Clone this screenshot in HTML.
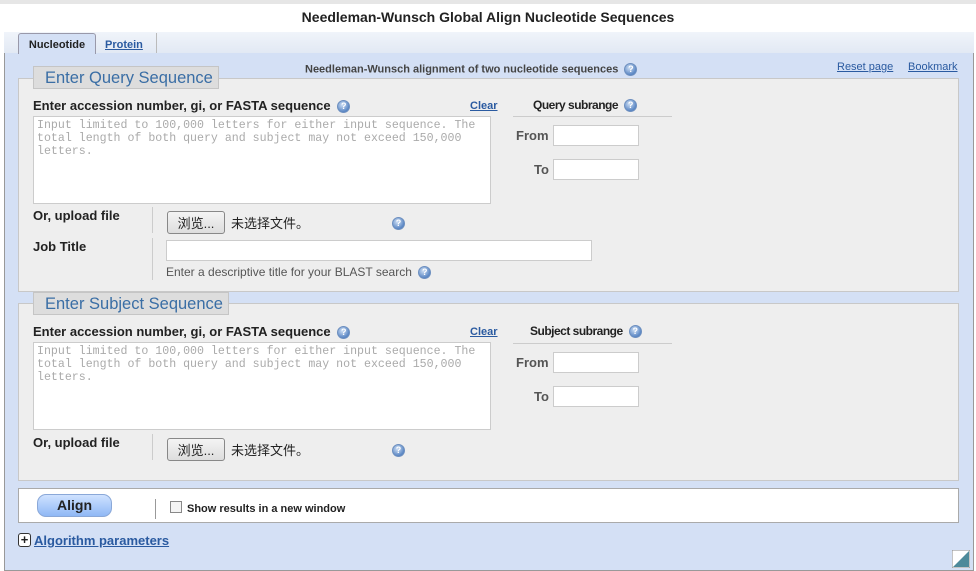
<!DOCTYPE html>
<html><head><meta charset="utf-8"><style>
*{box-sizing:border-box;margin:0;padding:0}
body{width:976px;height:571px;position:relative;background:#fff;font-family:"Liberation Sans","Noto Sans CJK SC",sans-serif;overflow:hidden;color:#222}
.a{position:absolute;white-space:nowrap}
.b{font-weight:bold;font-size:13px;color:#222}
.lnk{color:#2a5aa0;text-decoration:underline;font-size:11px}
.q{display:inline-block;width:13px;height:13px;border-radius:50%;background:radial-gradient(circle at 40% 35%,#cfe0f5,#5b87c4 70%);border:1px solid #6d8fbf;color:#fff;font-size:9px;font-weight:bold;text-align:center;line-height:11px;vertical-align:middle;margin-left:3px}
.fs{background:#eee;border:1px solid #c8c8c8}
.lg{background:#ddd;border:1px solid #c5c5c5;color:#3a6ea5;font-size:16.5px;padding:2px 11px;line-height:18px}
.ta{background:#fff;border:1px solid #ccc;font-family:"Liberation Mono",monospace;font-size:11.6px;color:#aaa;padding:2px 3px;line-height:13px;white-space:normal}
.in{background:#fff;border:1px solid #ccc}
.btn{border:1px solid #888;border-radius:3px;background:linear-gradient(#f4f4f4,#ddd);font-size:13px;padding:1px 0;text-align:center}
.vl{border-left:1px solid #ccc}
</style></head><body>
<div class="a" style="left:0;top:0;width:976px;height:4px;background:#e6e6e6"></div>
<div class="a b" style="left:0;top:9px;width:976px;text-align:center;font-size:14px">Needleman-Wunsch Global Align Nucleotide Sequences</div>
<div class="a" style="left:4px;top:32px;width:970px;height:22px;background:linear-gradient(#f0f4fa,#e2e9f4);border-bottom:1px solid #9aa"></div>
<div class="a" style="left:4px;top:53px;width:970px;height:518px;background:#d4e0f5;border:1px solid #999;border-top:none"></div>
<div class="a" style="left:18px;top:33px;width:78px;height:21px;background:#d4e0f5;border:1px solid #99a;border-bottom:none;border-radius:3px 3px 0 0;font-size:11px;font-weight:bold;text-align:center;line-height:22px">Nucleotide</div>
<div class="a lnk" style="left:105px;top:39px;font-weight:bold">Protein</div>
<div class="a" style="left:156px;top:33px;height:20px;border-left:1px solid #bbb"></div>
<div class="a" style="left:305px;top:63px;font-size:11px;font-weight:bold;color:#444">Needleman-Wunsch alignment of two nucleotide sequences <span class="q">?</span></div>
<div class="a lnk" style="left:837px;top:61px">Reset page</div>
<div class="a lnk" style="left:908px;top:61px">Bookmark</div>

<div class="a fs" style="left:18px;top:78px;width:941px;height:214px"></div>
<div class="a lg" style="left:33px;top:66px;width:186px;height:23px">Enter Query Sequence</div>
<div class="a b" style="left:33px;top:98px">Enter accession number, gi, or FASTA sequence <span class="q">?</span></div>
<div class="a lnk" style="left:470px;top:100px;font-weight:bold">Clear</div>
<div class="a ta" style="left:33px;top:116px;width:458px;height:88px">Input limited to 100,000 letters for either input sequence. The total length of both query and subject may not exceed 150,000 letters.</div>
<div class="a b" style="left:533px;top:98px;font-size:12px;letter-spacing:-0.5px">Query subrange <span class="q">?</span></div>
<div class="a" style="left:513px;top:116px;width:159px;border-top:1px solid #ccc"></div>
<div class="a b" style="left:516px;top:128px;color:#555">From</div>
<div class="a in" style="left:553px;top:125px;width:86px;height:21px"></div>
<div class="a b" style="left:534px;top:162px;color:#555">To</div>
<div class="a in" style="left:553px;top:159px;width:86px;height:21px"></div>
<div class="a b" style="left:33px;top:208px">Or, upload file</div>
<div class="a vl" style="left:152px;top:207px;height:26px"></div>
<div class="a btn" style="left:167px;top:211px;width:58px;height:23px">浏览...</div>
<div class="a" style="left:231px;top:213px;font-size:13px">未选择文件。</div>
<div class="a" style="left:389px;top:215px"><span class="q">?</span></div>
<div class="a b" style="left:33px;top:239px">Job Title</div>
<div class="a vl" style="left:152px;top:238px;height:42px"></div>
<div class="a in" style="left:166px;top:240px;width:426px;height:21px"></div>
<div class="a" style="left:166px;top:265px;font-size:12px;color:#555">Enter a descriptive title for your BLAST search <span class="q">?</span></div>

<div class="a fs" style="left:18px;top:303px;width:941px;height:178px"></div>
<div class="a lg" style="left:33px;top:292px;width:196px;height:23px">Enter Subject Sequence</div>
<div class="a b" style="left:33px;top:324px">Enter accession number, gi, or FASTA sequence <span class="q">?</span></div>
<div class="a lnk" style="left:470px;top:326px;font-weight:bold">Clear</div>
<div class="a ta" style="left:33px;top:342px;width:458px;height:88px">Input limited to 100,000 letters for either input sequence. The total length of both query and subject may not exceed 150,000 letters.</div>
<div class="a b" style="left:530px;top:324px;font-size:12px;letter-spacing:-0.5px">Subject subrange <span class="q">?</span></div>
<div class="a" style="left:513px;top:343px;width:159px;border-top:1px solid #ccc"></div>
<div class="a b" style="left:516px;top:355px;color:#555">From</div>
<div class="a in" style="left:553px;top:352px;width:86px;height:21px"></div>
<div class="a b" style="left:534px;top:389px;color:#555">To</div>
<div class="a in" style="left:553px;top:386px;width:86px;height:21px"></div>
<div class="a b" style="left:33px;top:435px">Or, upload file</div>
<div class="a vl" style="left:152px;top:434px;height:26px"></div>
<div class="a btn" style="left:167px;top:438px;width:58px;height:23px">浏览...</div>
<div class="a" style="left:231px;top:440px;font-size:13px">未选择文件。</div>
<div class="a" style="left:389px;top:442px"><span class="q">?</span></div>

<div class="a" style="left:18px;top:488px;width:941px;height:35px;background:#fff;border:1px solid #aaa"></div>
<div class="a" style="left:37px;top:494px;width:75px;height:23px;border-radius:9px;background:linear-gradient(#cfe2ff,#8fb8f5);border:1px solid #8aa8d8;font-weight:bold;font-size:14px;text-align:center;line-height:21px">Align</div>
<div class="a vl" style="left:155px;top:499px;height:20px;border-color:#999"></div>
<div class="a" style="left:170px;top:501px;width:12px;height:12px;border:1px solid #888;background:#f4f4f4"></div>
<div class="a" style="left:187px;top:503px;font-size:11px;font-weight:bold">Show results in a new window</div>
<div class="a" style="left:18px;top:533px;width:13px;height:14px;border:1px solid #333;border-radius:3px;background:#fff;font-size:13px;font-weight:bold;text-align:center;line-height:12px">+</div>
<div class="a lnk" style="left:34px;top:533px;font-size:13px;font-weight:bold">Algorithm parameters</div>
<svg class="a" style="left:952px;top:550px" width="18" height="18"><rect x="0" y="0" width="18" height="18" fill="#fff" stroke="#888"/><polygon points="1,17 17,1 17,17" fill="#4d8a9a"/></svg>
</body></html>
